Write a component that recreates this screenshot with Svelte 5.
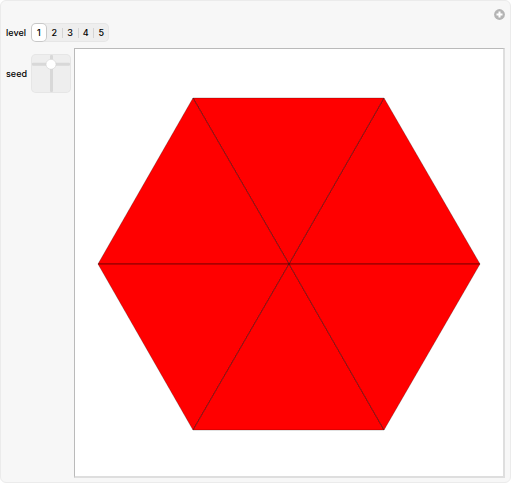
<script>
  const levels = [1, 2, 3, 4, 5];
  let level = $state(1);
  let seedX = $state(50);
  let seedY = $state(79);
  let open = $state(false);

  const knobX = $derived(6 + (seedX / 100) * 28);
  const knobY = $derived(34 - (seedY / 100) * 30);

  const center = [214, 215];
  const corners = [
    [405, 215],
    [309, 49],
    [118, 49],
    [23, 215],
    [118, 381],
    [309, 381]
  ];
  const triangles = corners.map((c, i) =>
    [center, c, corners[(i + 1) % 6]].map((p) => p.join(',')).join(' ')
  );
</script>

<main class="panel">
  <header>
    <button class="more" aria-label="More options" aria-expanded={open} onclick={() => (open = !open)}>
      <svg viewBox="0 0 12 12" width="12" height="12">
        <circle cx="6.5" cy="6.5" r="5.4" fill="#b4b4b4" />
        <path d="M6.5 3.5v6M3.5 6.5h6" stroke="#fff" stroke-width="2" />
      </svg>
    </button>
  </header>

  <fieldset class="row">
    <legend class="hidden">level</legend>
    <span class="name">level</span>
    <div class="setter">
      {#each levels as n}
        <label class:on={level === n}>
          <input class="hidden" type="radio" name="level" value={n} bind:group={level} />
          {n}
        </label>
      {/each}
    </div>
  </fieldset>

  <div class="body">
    <div class="row seed">
      <label class="name" for="seed-x">seed</label>
      <div class="pad">
        <svg viewBox="0 0 40 39" width="40" height="39">
          <rect x="1" y={knobY - 1.5} width="38" height="3" rx="1" fill="#d8d8d8" />
          <rect x={knobX - 1} y="1" width="3" height="37" rx="1" fill="#d8d8d8" />
          <circle cx={knobX} cy={knobY} r="5" fill="#fff" stroke="#d2d2d2" stroke-width="0.6" />
        </svg>
        <input id="seed-x" class="hidden" type="range" bind:value={seedX} />
        <input class="hidden" type="range" aria-label="seed, vertical" bind:value={seedY} />
      </div>
    </div>

    <div class="canvas">
      <svg viewBox="0 0 428 427" role="img" aria-label="Hexagon divided into six triangles">
        {#each triangles as points}
          <polygon {points} />
        {/each}
        {#each corners as [x, y]}
          <line x1={center[0]} y1={center[1]} x2={x} y2={y} />
        {/each}
      </svg>
    </div>
  </div>
</main>

<style>
  :global(body) {
    background: #fff;
  }
  .panel {
    box-sizing: border-box;
    padding: 7px 5px 4px;
    border: 1px solid #ebebeb;
    border-radius: 6px;
    background: #f7f7f7;
    color: #000;
    font: 500 9px/12px Inter, 'Liberation Sans', sans-serif;
  }
  header {
    display: flex;
    justify-content: flex-end;
    height: 15px;
  }
  .more {
    width: 12px;
    height: 12px;
    margin: 0;
    padding: 0;
    border: 0;
    background: none;
  }
  .more svg,
  .pad svg,
  .canvas svg {
    display: block;
  }
  .row {
    display: flex;
    align-items: center;
    min-width: 0;
    margin: 0;
    padding: 0;
    border: 0;
  }
  .name {
    width: 25px;
  }
  .setter {
    display: flex;
    box-sizing: border-box;
    width: 78px;
    height: 19px;
    border-radius: 5px;
    background: #eee;
    box-shadow: inset 0 0 0 1px #e6e6e6;
  }
  .setter label {
    position: relative;
    box-sizing: border-box;
    flex: 1;
    padding: 4px 0 3px;
    text-align: center;
  }
  .setter label:not(.on) + label:not(.on)::before {
    content: '';
    position: absolute;
    left: 0;
    top: 5px;
    width: 1px;
    height: 10px;
    background: #d4d4d4;
  }
  .setter .on {
    border-radius: 5px;
    background: #fff;
    box-shadow: inset 0 0 0 1px #c8c8c8;
  }
  .body {
    display: flex;
    align-items: flex-start;
    gap: 3px;
    padding-top: 6px;
  }
  .seed {
    padding-top: 6px;
  }
  .pad {
    position: relative;
    box-sizing: border-box;
    border-radius: 5px;
    background: #eee;
    box-shadow: inset 0 0 0 1px #e6e6e6;
  }
  .canvas {
    flex: 1;
    min-width: 0;
    border: solid;
    border-width: 1px 2px 2px 1px;
    border-color: #bababa #dedede #dedede #bababa;
    background: #fff;
  }
  .canvas svg {
    width: 100%;
    height: auto;
  }
  polygon {
    fill: #f00;
    stroke: #000;
    stroke-opacity: 0.4;
    stroke-width: 0.6;
    stroke-linejoin: round;
  }
  line {
    stroke: #000;
    stroke-opacity: 0.4;
    stroke-width: 0.7;
  }
  .hidden {
    position: absolute;
    width: 1px;
    height: 1px;
    margin: 0;
    padding: 0;
    opacity: 0;
    overflow: hidden;
    clip-path: inset(50%);
  }
</style>
